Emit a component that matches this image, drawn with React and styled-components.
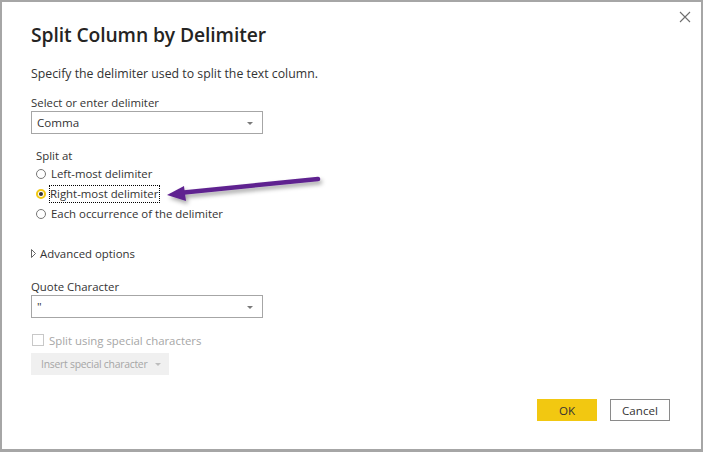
import React from "react";
import styled, { createGlobalStyle } from "styled-components";

const Global = createGlobalStyle`
  html, body { margin: 0; padding: 0; background: #fff; }
  body { font-family: "Open Sans", "Noto Sans", sans-serif; color: #333; }
  * { box-sizing: border-box; }
`;

const Dialog = styled.div`
  position: relative;
  width: 703px;
  height: 452px;
  border: 2px solid #a6a6a6;
  border-bottom-width: 3px;
  background: #fff;
  padding: 19px 29px 0 29px;
  display: flex;
  flex-direction: column;
`;

const CloseBtn = styled.button`
  position: absolute;
  top: 7px;
  right: 9px;
  width: 15px;
  height: 15px;
  padding: 0;
  border: none;
  background: none;
  display: flex;
  align-items: center;
  justify-content: center;
`;

const Title = styled.h1`
  margin: 0;
  font-family: "Open Sans", sans-serif;
  font-weight: 600;
  font-size: 19.3px;
  line-height: 28px;
  color: #252423;
  letter-spacing: -0.1px;
`;

const Text = styled.div`
  font-size: ${(p) => (p.$lead ? 12.3 : 11.4)}px;
  line-height: 16px;
  white-space: nowrap;
  color: ${(p) => (p.$muted ? "#a6a6a6" : "#333")};
  margin-top: ${(p) => p.$mt || 0}px;
  padding-left: ${(p) => p.$pl || 0}px;
`;

const Select = styled.div`
  width: 232px;
  height: 23px;
  border: 1px solid #a6a6a6;
  margin-top: ${(p) => p.$mt || 0}px;
  display: flex;
  align-items: center;
  justify-content: space-between;
  padding: 0 9px 0 5px;
  font-size: 11.6px;
  color: #333;
`;

const Caret = styled.span`
  width: 0;
  height: 0;
  border-left: 3px solid transparent;
  border-right: 3px solid transparent;
  border-top: 3px solid #7a7a7a;
  margin-top: 1px;
`;

const RadioGroup = styled.div`
  display: flex;
  flex-direction: column;
  gap: 3px;
  margin-top: 1px;
  padding-left: 5px;
`;

const RadioRow = styled.label`
  display: flex;
  align-items: center;
  gap: 5px;
  height: 17px;
  font-size: 11.4px;
  color: #333;
`;

const RadioDot = styled.span`
  width: 10px;
  height: 10px;
  border-radius: 50%;
  border: ${(p) => (p.$on ? "2px solid #f2c811" : "1.5px solid #767676")};
  display: flex;
  align-items: center;
  justify-content: center;
  flex: none;
  &::after {
    content: "";
    width: 4px;
    height: 4px;
    border-radius: 50%;
    background: #333;
    display: ${(p) => (p.$on ? "block" : "none")};
  }
`;

const FocusLabel = styled.span`
  outline: ${(p) => (p.$focus ? "1px dotted #000" : "none")};
  outline-offset: 0px;
  padding: 0 1px 0 0;
  margin-left: -1px;
  line-height: 16px;
`;

const Expander = styled.div`
  display: flex;
  align-items: center;
  gap: 4px;
  height: 16px;
  margin-top: 23px;
  font-size: 11.4px;
  color: #333;
`;

const CheckRow = styled.div`
  display: flex;
  align-items: center;
  gap: 5px;
  height: 16px;
  margin-top: 14px;
  padding-left: 1px;
  font-size: 11.4px;
  color: #a6a6a6;
`;

const Box = styled.span`
  width: 12px;
  height: 12px;
  border: 1px solid #c8c8c8;
  flex: none;
`;

const SpecialBtn = styled.div`
  width: 138px;
  height: 22px;
  background: #f0f0f0;
  margin-top: 5px;
  display: flex;
  align-items: center;
  gap: 8px;
  padding-left: 10px;
  font-size: 10.4px;
  letter-spacing: -0.25px;
  white-space: nowrap;
  color: #a6a6a6;
`;

const CaretLight = styled(Caret)`
  border-top-color: #bdbdbd;
`;

const Footer = styled.div`
  display: flex;
  justify-content: flex-end;
  gap: 13px;
  margin-top: auto;
  margin-bottom: 28px;
  padding-right: 2px;
`;

const Button = styled.button`
  width: 60px;
  height: 22px;
  font-family: "Open Sans", sans-serif;
  font-size: 11.6px;
  color: #333;
  padding: 0;
  background: ${(p) => (p.$primary ? "#f2c811" : "#fff")};
  border: ${(p) => (p.$primary ? "none" : "1px solid #8a8a8a")};
`;

const Arrow = styled.svg`
  position: absolute;
  left: 155px;
  top: 165px;
  overflow: visible;
`;

export default function App() {
  return (
    <>
      <Global />
      <Dialog>
        <CloseBtn aria-label="Close">
          <svg width="12" height="12" viewBox="0 0 12 12">
            <path d="M1 1 L11 11 M11 1 L1 11" stroke="#6e6e6e" strokeWidth="1.1" />
          </svg>
        </CloseBtn>
        <Title>Split Column by Delimiter</Title>
        <Text $lead $mt={17}>Specify the delimiter used to split the text column.</Text>
        <Text $mt={13}>Select or enter delimiter</Text>
        <Select>
          <span>Comma</span>
          <Caret />
        </Select>
        <Text $mt={14} $pl={5}>Split at</Text>
        <RadioGroup>
          <RadioRow>
            <RadioDot />
            <span>Left-most delimiter</span>
          </RadioRow>
          <RadioRow>
            <RadioDot $on />
            <FocusLabel $focus>Right-most delimiter</FocusLabel>
          </RadioRow>
          <RadioRow>
            <RadioDot />
            <span>Each occurrence of the delimiter</span>
          </RadioRow>
        </RadioGroup>
        <Expander>
          <svg width="5" height="9" viewBox="0 0 5 9">
            <path d="M0.5 0.5 L4.5 4.5 L0.5 8.5 Z" fill="none" stroke="#555" strokeWidth="0.9" />
          </svg>
          <span>Advanced options</span>
        </Expander>
        <Text $mt={18}>Quote Character</Text>
        <Select>
          <span>"</span>
          <Caret />
        </Select>
        <CheckRow>
          <Box />
          <span>Split using special characters</span>
        </CheckRow>
        <SpecialBtn>
          <span>Insert special character</span>
          <CaretLight />
        </SpecialBtn>
        <Footer>
          <Button $primary>OK</Button>
          <Button>Cancel</Button>
        </Footer>
        <Arrow width="170" height="40" viewBox="0 0 170 40">
          <defs>
            <filter id="sh" x="-20%" y="-50%" width="140%" height="200%">
              <feDropShadow dx="2" dy="3" stdDeviation="2" floodColor="#000" floodOpacity="0.35" />
            </filter>
          </defs>
          <g filter="url(#sh)">
            <path d="M161 12 L22 26" stroke="#5f2390" strokeWidth="4.5" strokeLinecap="round" />
            <path d="M10 28 L27 19 L29 34 Z" fill="#5f2390" />
          </g>
        </Arrow>
      </Dialog>
    </>
  );
}
